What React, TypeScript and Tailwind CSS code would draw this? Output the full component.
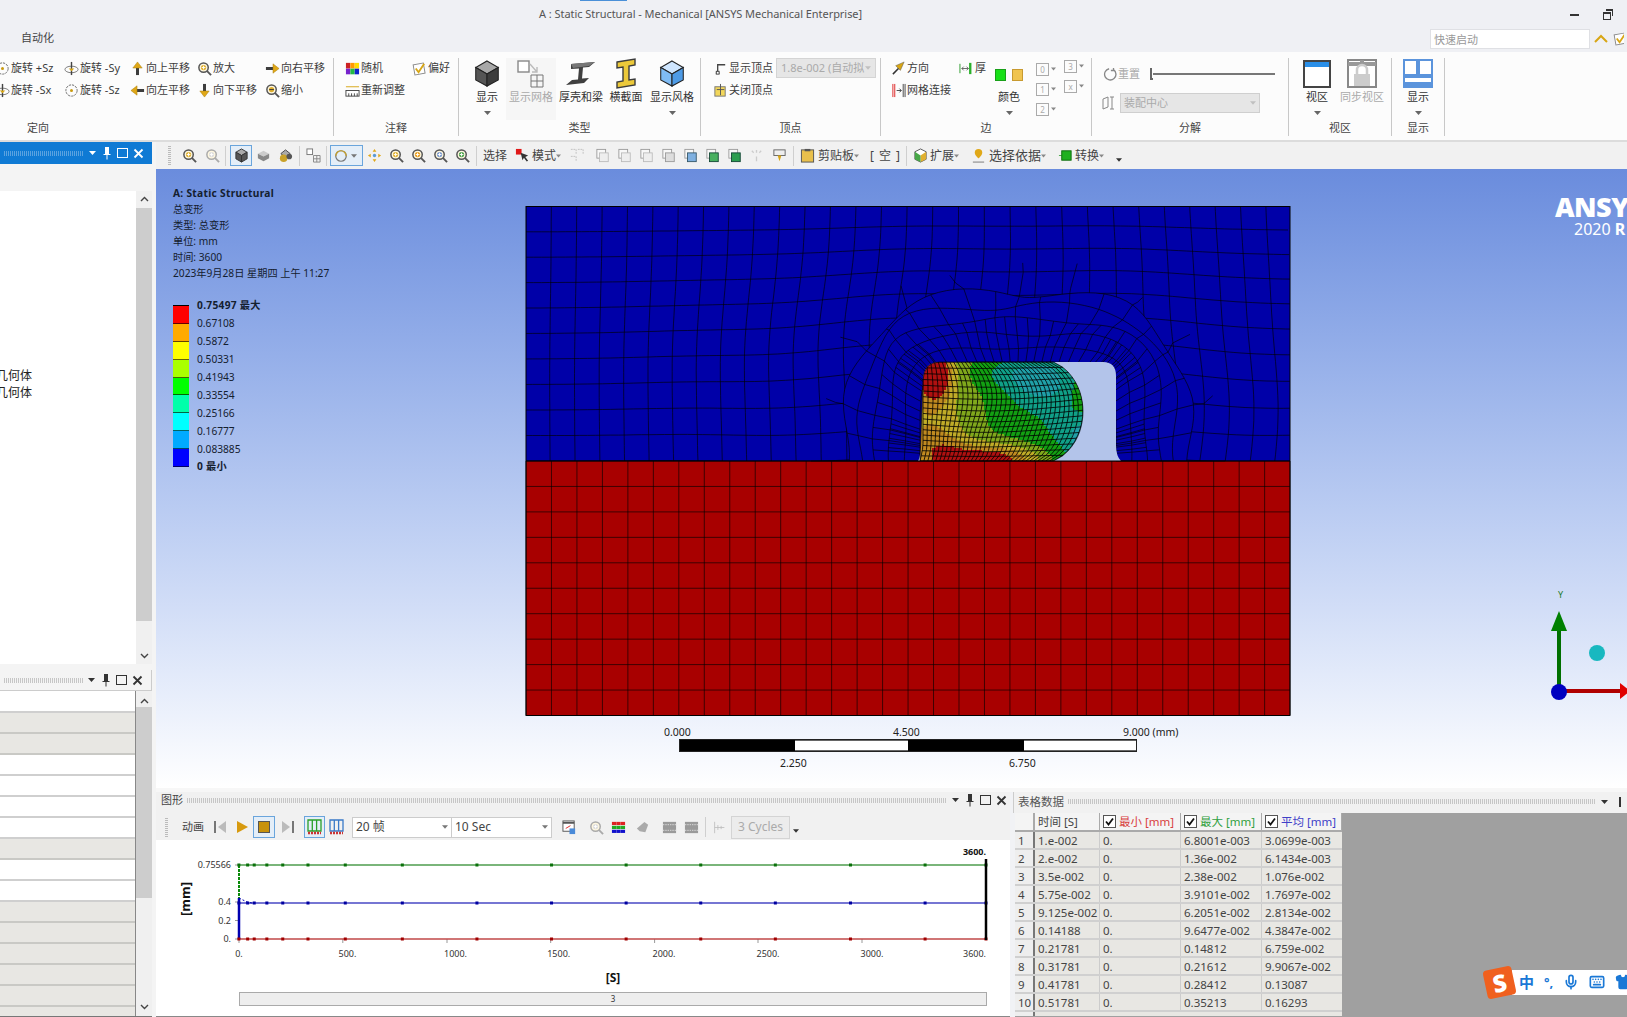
import React from 'react';
import { Keyboard, Mic, Shirt } from 'lucide-react';

const G = (a: number, b: number, sa: number, sb: number) => Math.exp(-(a * a) / (sa * sa) - (b * b) / (sb * sb));

// ---------- mesh generation for the contour plot ----------
const VX = 1020;
const warp = (x: number, y: number): [number, number] => {
  const d = G(x - VX, y - 400, 250, 125);
  return [x + (x - VX) * 0.13 * d + 4 * Math.sin(y / 30) * d, y + (y - 461) * 0.17 * d + 4 * Math.sin(x / 38) * d];
};
const pts = (p: [number, number][]) => p.map(([x, y]) => `${x.toFixed(1)},${y.toFixed(1)}`).join(' ');
const baseLines: string[] = [];
for (let i = 0; i <= 30; i++) {
  const x = 526 + i * 25.47;
  const p: [number, number][] = [];
  for (let y = 206; y <= 462; y += 8) p.push(warp(x, y));
  baseLines.push(pts(p));
}
for (let j = 0; j <= 10; j++) {
  const y = 206.5 + j * 25.45;
  const p: [number, number][] = [];
  for (let x = 526; x <= 1290; x += 8) p.push(warp(x, y));
  baseLines.push(pts(p));
}
const ring = (k: number, phi: number): [number, number] => {
  const a = 98 + 15 * k;
  const b = 99 + 14 * k;
  const n = Math.max(2.4, 6 - 0.6 * k);
  const c = Math.cos(phi);
  const s = Math.sin(phi);
  const r = 1 / Math.pow(Math.pow(Math.abs(c) / a, n) + Math.pow(Math.abs(s) / b, n), 1 / n);
  return [1018 + r * c + Math.sin(k + phi * 9) * k * 0.9, 461 - r * s + Math.sin(k * 2 + phi * 7) * k * 1.1 * s];
};
const phis = Array.from({ length: 41 }, (_, i) => (Math.PI * i) / 40);
const ringLines = Array.from({ length: 6 }, (_, k) => pts(Array.from({ length: 81 }, (_, i) => ring(k, (Math.PI * i) / 80))));
const rayLines: string[] = [];
phis.forEach((p, i) => {
  const end = i % 2 === 0 ? (i % 4 === 0 ? 7 : 5) : 3;
  rayLines.push(pts(Array.from({ length: end + 1 }, (_, k) => ring(k, p))));
});
// extra short rays where the mesh fans out round the corners and at the foot of the groove
[6, 8, 10, 12, 14, 16, 38, 40, 42, 44, 46, 48, 50, 52, 130, 132, 134, 136, 138, 140, 142, 164, 166, 168, 170, 172, 174].forEach((deg) => {
  rayLines.push(pts(Array.from({ length: 3 }, (_, k) => ring(k, (deg * Math.PI) / 180))));
});
const outerRing = `1188,461 ${ringLines[5]} 848,461`;

const rubberL = (t: number) => 923 - (t > 0.85 ? (t - 0.85) * 20 : 0);
const rubberR = (t: number) => 1040 + 43 * Math.sqrt(Math.max(0, 1 - Math.pow(1.9 * (t - 0.5), 2)));
const rubberPoint = (s: number, t: number): [number, number] => {
  const x = rubberL(t) + (rubberR(t) - rubberL(t)) * s;
  return [x + 5 * Math.sin(2 * Math.PI * t) * Math.sin(Math.PI * s), 362 + 99 * t + 5 * Math.sin(3 * s + 0.4) * Math.sin(Math.PI * t)];
};
const rubberEdge = Array.from({ length: 21 }, (_, i) => {
  const t = i / 20;
  return `L${rubberR(t).toFixed(1)},${(362 + 99 * t).toFixed(1)}`;
}).join(' ');
const rubberPath = `M920,461 L923,380 Q924,362 940,362 ${rubberEdge} Z`;
const rubberLines: string[] = [];
for (let i = 0; i <= 34; i++) rubberLines.push(pts(Array.from({ length: 17 }, (_, k) => rubberPoint(i / 34, k / 16))));
for (let k = 0; k <= 18; k++) rubberLines.push(pts(Array.from({ length: 35 }, (_, i) => rubberPoint(i / 34, k / 18))));

const bands = ['#0000b0', '#0070c0', '#20a0a8', '#10a088', '#12a012', '#80a81c', '#c0ac28', '#c08a20', '#b01010'];
const field = (u: number, w: number) =>
  0.66 - 0.28 * u +
  0.5 * G(u - 0.07, w - 0.12, 0.1, 0.24) +
  0.45 * G(u - 0.42, w - 0.98, 0.33, 0.16) +
  0.1 * G(u - 0.05, w - 0.6, 0.2, 0.4) +
  0.12 * G(u - 0.12, w - 0.85, 0.15, 0.2) -
  0.16 * G(u - 0.7, w - 0.22, 0.2, 0.22) -
  0.1 * G(u - 0.55, w - 0.1, 0.25, 0.15) +
  0.14 * G(u - 1, w - 0.3, 0.1, 0.3) -
  0.15 * G(u - 1, w - 0.75, 0.1, 0.2);
const contourRuns: { x: number; y: number; w: number; c: string }[] = [];
for (let y = 360; y < 462; y += 2) {
  let start = 918;
  let cur = -1;
  for (let x = 918; x <= 1086; x += 2) {
    const b = Math.max(2, Math.min(8, Math.floor(field((x - 923) / 160, (y - 362) / 99) * 9)));
    if (cur >= 0 && (b !== cur || x === 1086)) {
      contourRuns.push({ x: start, y, w: x - start, c: bands[cur] });
      start = x;
    }
    cur = b;
  }
}

// ---------- small icons ----------
const Svg = ({ w = 15, h = 15, box = '0 0 16 16', children }: { w?: number; h?: number; box?: string; children: React.ReactNode }) => (
  <svg width={w} height={h} viewBox={box} className="shrink-0">
    {children}
  </svg>
);
const RotDot = () => (
  <Svg>
    <circle cx="8" cy="8" r="6" fill="none" stroke="#666" strokeDasharray="2.5 1" />
    <circle cx="8" cy="8" r="1.6" fill="#c99a10" />
  </Svg>
);
const RotAxis = () => (
  <Svg>
    <ellipse cx="8" cy="9" rx="7" ry="3.5" fill="none" stroke="#777" />
    <path d="M8 1v14" stroke="#444" strokeWidth="1.5" />
    <path d="M5 8l3 3 3-3z" fill="#d8a614" />
  </Svg>
);
const Pan = ({ r = 0 }: { r?: number }) => (
  <Svg>
    <g transform={`rotate(${r} 8 8)`}>
      <path d="M6.4 7h3.2v8H6.4z" fill="#3d3d3d" />
      <path d="M8 1l5 6.5H3z" fill="#e0a818" stroke="#a87c10" strokeWidth=".5" />
    </g>
  </Svg>
);
const Mag = ({ kind = '+', c = '#e0b030', ring: rc = '#555' }: { kind?: string; c?: string; ring?: string }) => (
  <Svg>
    <circle cx="7" cy="7" r="5" fill="#fff8e0" stroke={rc} strokeWidth="1.6" />
    <circle cx="7" cy="7" r="2.8" fill={c} />
    {kind === '+' && <path d="M5 7h4M7 5v4" stroke="#fff" />}
    {kind === '-' && <path d="M4.5 7h5" stroke="#333" />}
    <path d="M10.5 10.5L15 15" stroke={rc} strokeWidth="2" />
  </Svg>
);
const ColorGrid = ({ full = false }: { full?: boolean }) => (
  <Svg>
    {(full
      ? ['#d22', '#d22', '#d22', '#2a2', '#2a2', '#2a2', '#11c', '#11c', '#11c']
      : ['#c22', '#f90', '#fd0', '#72c', '#2b4', '#12c']
    ).map((c, i) => (
      <rect key={i} x={1 + (i % 3) * 4.7} y={2 + Math.floor(i / 3) * (full ? 4.2 : 6.2)} width="4.6" height={full ? 3.4 : 6} fill={c} />
    ))}
  </Svg>
);
const Hex = ({ top, left, right }: { top: string; left: string; right: string }) => (
  <Svg w={26} h={29} box="0 0 30 31">
    <path d="M15 1L28 8.5 15 16 2 8.5z" fill={top} stroke="#222" strokeWidth="1.2" />
    <path d="M2 8.5L15 16v14L2 23z" fill={left} stroke="#222" strokeWidth="1.2" />
    <path d="M28 8.5L15 16v14l13-7z" fill={right} stroke="#222" strokeWidth="1.2" />
  </Svg>
);
const Caret = ({ c = '#555', w = 'w-[7px]' }: { c?: string; w?: string }) => (
  <svg viewBox="0 0 7 4" className={`${w} h-[4px] shrink-0`}>
    <path d="M0 0h7L3.5 4z" fill={c} />
  </svg>
);
const PanelButtons = ({ c = '#333' }: { c?: string }) => (
  <div className="flex items-center gap-[5px] shrink-0">
    <Caret c={c} w="w-[9px]" />
    <svg width="10" height="14" viewBox="0 0 10 14">
      <path d="M3 1h4v7h1.5v1H5.5v4.500h-1V9H1.500V8H3z" fill={c} />
    </svg>
    <div className="w-[11px] h-[10px] border-[1.5px]" style={{ borderColor: c }} />
    <svg width="11" height="11" viewBox="0 0 11 11">
      <path d="M1.500 1.500l8 8M9.500 1.500l-8 8" stroke={c} strokeWidth="1.800" />
    </svg>
  </div>
);
const Grip = ({ light = false }: { light?: boolean }) => (
  <div
    className={
      light
        ? 'flex-1 h-[5px] mx-[4px] bg-[repeating-linear-gradient(90deg,#5aa2e0_0_1px,transparent_1px_2px)]'
        : 'flex-1 h-[5px] mx-[4px] bg-[repeating-linear-gradient(90deg,#c6c6c6_0_1px,transparent_1px_2px)]'
    }
  />
);
const ScrollArrow = ({ up = false }: { up?: boolean }) => (
  <svg width="9" height="6" viewBox="0 0 9 6" className="mx-auto">
    <path d={up ? 'M1 5l3.500-3.500L8 5' : 'M1 1l3.500 3.500L8 1'} fill="none" stroke="#444" strokeWidth="1.400" />
  </svg>
);

// ---------- ribbon ----------
const Item = ({ icon, label, className = '' }: { icon: React.ReactNode; label: string; className?: string }) => (
  <div className={`flex items-center gap-px h-[20px] whitespace-nowrap ${className}`}>
    <span className="w-[15px] flex justify-center shrink-0">{icon}</span>
    <span>{label}</span>
  </div>
);
const Group = ({ label, className, contentClass = '', labelClass = 'text-center', children }: { label: string; className: string; contentClass?: string; labelClass?: string; children: React.ReactNode }) => (
  <div className={`h-[78px] mt-[6px] flex flex-col border-r border-[#c8c8c8] shrink-0 ${className}`}>
    <div className={`h-[62px] overflow-visible ${contentClass}`}>{children}</div>
    <div className={`h-[16px] leading-[16px] text-[#444] ${labelClass}`}>{label}</div>
  </div>
);
const BigBtn = ({ icon, label, className = '', off = false, caret = false }: { icon: React.ReactNode; label: string; className?: string; off?: boolean; caret?: boolean }) => (
  <div className={`flex flex-col items-center shrink-0 ${className}`}>
    <div className="h-[31px] flex items-center justify-center">{icon}</div>
    <div className={`h-[16px] leading-[16px] whitespace-nowrap ${off ? 'text-[#aaa]' : 'text-[#333]'}`}>{label}</div>
    {caret && (
      <div className="mt-[6px]">
        <Caret c={off ? '#aaa' : '#666'} />
      </div>
    )}
  </div>
);
const NumBox = ({ t }: { t: string }) => (
  <div className="flex items-center gap-[2px] h-[20px]">
    <div className="w-[13px] h-[13px] border border-[#aaa] text-[8px] leading-[11px] text-center text-[#aaa]">{t}</div>
    <Caret c="#888" w="w-[5px]" />
  </div>
);

const Ribbon = () => (
  <div className="h-[90px] flex bg-[#fcfcfc] border-b-2 border-[#dcdcdc] text-[11px] text-[#3c3c3c]">
    <Group label="定向" className="w-[334px]" labelClass="pl-[27px]">
      <div className="grid grid-cols-[64px_66px_67px_68px_1fr] gap-y-[2px]">
        <Item className="-ml-[5px]" icon={<RotDot />} label="旋转 +Sz" />
        <Item icon={<RotAxis />} label="旋转 -Sy" />
        <Item icon={<Pan />} label="向上平移" />
        <Item icon={<Mag />} label="放大" />
        <Item icon={<Pan r={90} />} label="向右平移" />
        <Item className="-ml-[5px]" icon={<RotAxis />} label="旋转 -Sx" />
        <Item icon={<RotDot />} label="旋转 -Sz" />
        <Item icon={<Pan r={-90} />} label="向左平移" />
        <Item icon={<Pan r={180} />} label="向下平移" />
        <Item icon={<Mag kind="-" />} label="缩小" />
      </div>
    </Group>
    <Group label="注释" className="w-[125px]" contentClass="pl-[11px]">
      <div className="flex flex-col gap-[2px]">
        <div className="flex">
          <Item className="w-[67px]" icon={<ColorGrid />} label="随机" />
          <Item icon={
            <Svg>
              <rect x="2" y="3" width="11" height="11" fill="#fff" stroke="#888" transform="rotate(-10 8 8)" />
              <path d="M4 8l3 4 6-9" fill="none" stroke="#d8a614" strokeWidth="2" />
            </Svg>
          } label="偏好" />
        </div>
        <Item icon={
          <Svg>
            <path d="M1 4h14" stroke="#d8a614" />
            <rect x="1" y="8" width="14" height="6" fill="#fff" stroke="#444" />
            <path d="M4 11v3M7 11v3M10 11v3M13 11v3" stroke="#444" />
          </Svg>
        } label="重新调整" />
      </div>
    </Group>
    <Group label="类型" className="w-[242px]">
      <div className="flex pl-[13px]">
        <BigBtn className="w-[30px]" caret label="显示" icon={<Hex top="#a8a8a8" left="#555" right="#3c3c3c" />} />
        <BigBtn className="w-[50px] ml-[4px] bg-[#f6f6f6] h-[62px]" off label="显示网格" icon={
          <Svg w={30} h={30} box="0 0 30 30">
            <rect x="2" y="2" width="11" height="11" fill="#fff" stroke="#888" strokeWidth="1.400" />
            <path d="M14 5l7 8M21 8v5h-5" fill="none" stroke="#bbb" strokeWidth="1.400" />
            <path d="M15 16h12v12H15zM21 16v12M15 22h12" fill="none" stroke="#777" />
          </Svg>
        } />
        <BigBtn className="w-[50px]" label="厚壳和梁" icon={
          <Svg w={32} h={26} box="0 0 32 26">
            <path d="M6 3l24-2-6 5-6 .5-1 11 7-.5-5 5L1 24l6-5 6-.5 1-11-8 .5z" fill="#3f3f3f" />
            <path d="M6 3l24-2-6 4L8 7z" fill="#777" />
          </Svg>
        } />
        <BigBtn className="w-[42px] -ml-px" label="横截面" icon={
          <Svg w={22} h={31} box="0 0 22 31">
            <path d="M2 4l18-3v6l-6 1v14l6-1v6L2 30v-6l6-1V9L2 10z" fill="#ecc93a" stroke="#3c3c3c" strokeWidth="1.400" />
          </Svg>
        } />
        <BigBtn className="w-[44px] ml-[3px]" caret label="显示风格" icon={<Hex top="#cfe6ff" left="#7fbcf5" right="#4e9be6" />} />
      </div>
    </Group>
    <Group label="顶点" className="w-[180px]" contentClass="pl-[12px]">
      <div className="flex flex-col gap-[2px]">
        <div className="flex items-center">
          <Item icon={
            <Svg>
              <path d="M5 13V4h8M3 13h4" fill="none" stroke="#444" strokeWidth="1.400" />
              <rect x="3.500" y="11" width="3" height="3" fill="#fff" stroke="#444" />
            </Svg>
          } label="显示顶点" />
          <div className="ml-[3px] w-[100px] h-[20px] flex items-center px-[4px] bg-[#e6e6e6] border border-[#d4d4d4] text-[#aaa] whitespace-nowrap overflow-hidden">
            <span className="flex-1 overflow-hidden">1.8e-002 (自动拟</span>
            <Caret c="#c0c0c0" w="w-[6px]" />
          </div>
        </div>
        <Item icon={
          <Svg>
            <rect x="2" y="4" width="11" height="10" fill="#f3d75a" stroke="#777" />
            <path d="M8 1v12M4 7h8" stroke="#555" />
          </Svg>
        } label="关闭顶点" />
      </div>
    </Group>
    <Group label="边" className="w-[211px]">
      <div className="flex">
        <div className="w-[113px] pl-[10px] flex flex-col gap-[2px]">
          <div className="flex">
            <Item className="w-[68px]" icon={
              <Svg>
                <path d="M2 14l7-7" stroke="#333" strokeWidth="1.600" />
                <path d="M5 5l9-4-4 9z" fill="#d8a614" stroke="#555" strokeWidth=".5" />
              </Svg>
            } label="方向" />
            <Item icon={
              <Svg>
                <path d="M1 3v10" stroke="#2a9a2a" />
                <path d="M12 2v12" stroke="#2ab02a" strokeWidth="2.500" />
                <path d="M3 8h7M3 8l2-2M3 8l2 2M10 8l-2-2M10 8l-2 2" stroke="#444" fill="none" strokeWidth=".8" />
              </Svg>
            } label="厚" />
          </div>
          <Item icon={
            <Svg>
              <path d="M2 1v14M4 1v14" stroke="#d22" />
              <path d="M13 1v14M15 1v14" stroke="#444" />
              <path d="M6 8h5M9 6l2 2-2 2" stroke="#444" fill="none" />
            </Svg>
          } label="网格连接" />
        </div>
        <BigBtn className="w-[30px]" caret label="颜色" icon={
          <div className="flex gap-[6px] mt-[3px]">
            <div className="w-[11px] h-[12px] bg-[#18e018] border border-[#19a019]" />
            <div className="w-[11px] h-[12px] bg-[#f0c450] border border-[#c89a30]" />
          </div>
        } />
        <div className="ml-[12px] w-[28px] pt-[1px]">
          <NumBox t="0" />
          <NumBox t="1" />
          <NumBox t="2" />
        </div>
        <div className="flex-1 -mt-[2px]">
          <NumBox t="3" />
          <NumBox t="x" />
        </div>
      </div>
    </Group>
    <Group label="分解" className="w-[197px]" contentClass="pl-[10px] text-[#aaa]">
      <div className="flex items-center mt-[6px] h-[20px]">
        <Item icon={
          <svg width="14" height="14" viewBox="0 0 16 16">
            <path d="M12 3a6.500 6.500 0 1 1-5-1M12 1v3H9" fill="none" stroke="#888" strokeWidth="1.500" />
          </svg>
        } label="重置" />
        <div className="ml-[10px] w-[125px] flex items-center">
          <div className="w-[3px] h-[12px] border-l-2 border-b-2 border-[#666]" />
          <div className="flex-1 h-[2px] bg-[#777]" />
        </div>
      </div>
      <div className="flex items-center mt-[9px]">
        <svg width="14" height="16" viewBox="0 0 14 16" className="mr-[4px] shrink-0">
          <path d="M1 4l5-2v10l-5 2zM10 2v12M8 2h4M8 14h4" fill="none" stroke="#888" />
        </svg>
        <div className="w-[140px] h-[20px] flex items-center px-[3px] bg-[#e6e6e6] border border-[#cfcfcf]">
          <span className="flex-1">装配中心</span>
          <Caret c="#c0c0c0" w="w-[6px]" />
        </div>
      </div>
    </Group>
    <Group label="视区" className="w-[103px]" contentClass="pl-[13px]">
      <div className="flex">
        <BigBtn className="w-[30px]" caret label="视区" icon={
          <div className="w-[28px] h-[28px] border-2 border-[#444] bg-white">
            <div className="h-[5px] bg-[#2a8fe8]" />
          </div>
        } />
        <BigBtn className="w-[46px] ml-[7px]" off label="同步视区" icon={
          <Svg w={30} h={29} box="0 0 30 29">
            <rect x="1" y="1" width="28" height="27" fill="#fff" stroke="#888" strokeWidth="2" />
            <path d="M1 5h28M15 1v6" stroke="#999" strokeWidth="4" />
            <path d="M10 15v-4a5 5 0 0 1 10 0v4" fill="none" stroke="#ccc" strokeWidth="2.500" />
            <rect x="7" y="15" width="16" height="12" fill="#ccc" />
          </Svg>
        } />
      </div>
    </Group>
    <Group label="显示" className="w-[53px]">
      <div className="flex justify-center">
        <BigBtn caret label="显示" icon={
          <Svg w={30} h={30} box="0 0 30 30">
            <path d="M1 1h13v15H1zM16 1h13v15H16zM1 18h28v10H1z" fill="#fff" stroke="#5b94dc" strokeWidth="2" />
            <path d="M1 25h28" stroke="#5b94dc" strokeWidth="4" />
          </Svg>
        } />
      </div>
    </Group>
  </div>
);

// ---------- graphics toolbar ----------
const Sep = ({ className = '' }: { className?: string }) => <div className={`w-px h-[20px] bg-[#cfcfcf] shrink-0 ${className}`} />;
const PageIcon = ({ c = '#bbb', fill = '#eee' }: { c?: string; fill?: string }) => (
  <Svg w={14} h={15}>
    <rect x="1" y="1" width="10" height="10" fill="#f8f8f8" stroke="#999" />
    <rect x="4" y="5" width="10" height="10" fill={fill} stroke={c} />
  </Svg>
);

const GraphicsToolbar = () => (
  <div className="h-[27px] flex items-center pl-[12px] bg-[#f1f1f1] text-[12px] text-[#444] whitespace-nowrap">
    <div className="w-[3px] h-[19px] bg-[repeating-linear-gradient(0deg,#bbb_0_1px,transparent_1px_2px)]" />
    <div className="flex items-center ml-[11px] gap-[8px]">
      <Mag />
      <Mag c="#ddd" ring="#aaa" />
    </div>
    <Sep className="ml-[5px]" />
    <div className="ml-[4px] w-[22px] h-[21px] flex items-center justify-center bg-[#e4eef8] border border-[#6aa5dc]">
      <Svg>
        <path d="M8 1l6 3.500L8 8 2 4.500z" fill="#aaa" stroke="#333" />
        <path d="M2 4.500L8 8v7l-6-3.500zM14 4.500L8 8v7l6-3.500z" fill="#555" stroke="#333" />
      </Svg>
    </div>
    <div className="ml-[4px]">
      <Svg>
        <path d="M8 3l6 3-6 3-6-3z" fill="#ccc" />
        <path d="M2 6l6 3v5l-6-3zM14 6L8 9v5l6-3z" fill="#888" />
      </Svg>
    </div>
    <div className="ml-[7px]">
      <Svg>
        <path d="M3 6l5-4 5 4-5 4z" fill="#aaa" stroke="#444" />
        <circle cx="6" cy="11" r="4" fill="#c9a22a" />
        <circle cx="12" cy="9" r="3" fill="#555" />
      </Svg>
    </div>
    <Sep className="ml-[6px]" />
    <div className="ml-[6px]">
      <Svg>
        <rect x="1" y="1" width="6" height="6" fill="#fff" stroke="#777" />
        <path d="M8 8h7v7H8zM11.500 8v7M8 11.500h7" fill="none" stroke="#888" />
      </Svg>
    </div>
    <Sep className="ml-[5px]" />
    <div className="ml-[3px] w-[33px] h-[21px] flex items-center gap-[3px] pl-[3px] bg-[#e4eef8] border border-[#6aa5dc]">
      <Svg w={14} h={14}>
        <circle cx="8" cy="8" r="6" fill="none" stroke="#777" strokeWidth="1.400" />
        <path d="M2 8a6 6 0 0 1 12 0" fill="none" stroke="#c9a22a" strokeWidth="1.400" />
      </Svg>
      <Caret c="#777" w="w-[6px]" />
    </div>
    <div className="ml-[4px]">
      <Svg>
        <path d="M8 1l2 3H6zM8 15l2-3H6zM1 8l3-2v4zM15 8l-3-2v4z" fill="#e0a818" />
        <circle cx="8" cy="8" r="1.800" fill="#5a9ad8" />
      </Svg>
    </div>
    <div className="ml-[7px] flex items-center gap-[7px]">
      <Mag />
      <Mag c="#e89a18" />
      <Mag c="#7a9ad0" />
      <Mag c="#49a04a" />
    </div>
    <Sep className="ml-[6px]" />
    <span className="ml-[6px]">选择</span>
    <div className="ml-[8px]">
      <Svg>
        <rect x="1" y="1" width="6" height="6" fill="#e01818" />
        <path d="M6 5l8 3-3 1.500 3 4-1.500 1-3-4L8 13z" fill="#333" />
      </Svg>
    </div>
    <span className="ml-[2px]">模式</span>
    <Caret c="#888" w="w-[5px]" />
    <div className="ml-[9px]">
      <Svg w={14} h={15}>
        <path d="M1 1h6v6M9 1h6v6M1 9h6v6" fill="none" stroke="#bbb" strokeDasharray="2 1" />
      </Svg>
    </div>
    <div className="ml-[12px] flex items-center gap-[8px]">
      <PageIcon />
      <PageIcon />
      <PageIcon />
      <PageIcon c="#999" fill="#ddd" />
      <PageIcon c="#356" fill="#7fb0e0" />
      <PageIcon c="#143" fill="#48b060" />
      <PageIcon c="#143" fill="#2c9e50" />
    </div>
    <div className="ml-[7px]">
      <Svg>
        <path d="M3 3l2 2M8 2v3M13 3l-2 2M8 9v5" stroke="#ccc" strokeWidth="1.400" />
      </Svg>
    </div>
    <div className="ml-[8px]">
      <Svg>
        <rect x="2" y="2" width="12" height="6" fill="#eee" stroke="#666" />
        <path d="M6 8l2 6 2-6z" fill="#d8a614" />
      </Svg>
    </div>
    <Sep className="ml-[6px]" />
    <div className="ml-[6px]">
      <Svg>
        <rect x="1.500" y="2" width="13" height="13" fill="#e9c04c" stroke="#555" />
        <rect x="5" y="1" width="6" height="2.500" fill="#555" />
      </Svg>
    </div>
    <span className="ml-[3px]">剪贴板</span>
    <Caret c="#888" w="w-[5px]" />
    <span className="ml-[11px] w-[30px] flex justify-between"><span>[</span><span>空</span><span>]</span></span>
    <Sep className="ml-[6px]" />
    <div className="ml-[6px]">
      <Svg>
        <path d="M8 1l6 3v8l-6 3-6-3V4z" fill="#fff" stroke="#555" />
        <path d="M8 8l6-4v8l-6 3z" fill="#e0b030" />
        <path d="M2 4l6 4v7l-6-3z" fill="#48a848" />
      </Svg>
    </div>
    <span className="ml-[2px]">扩展</span>
    <Caret c="#888" w="w-[5px]" />
    <div className="ml-[12px]">
      <Svg>
        <path d="M8 1a4 4 0 0 1 4 4c0 3-4 6-4 6S4 8 4 5a4 4 0 0 1 4-4z" fill="#e0a818" />
        <path d="M2 15h12" stroke="#777" />
      </Svg>
    </div>
    <span className="ml-[3px] text-[13px]">选择依据</span>
    <Caret c="#888" w="w-[5px]" />
    <div className="ml-[12px]">
      <Svg>
        <path d="M1 8h3" stroke="#4a4" />
        <rect x="4" y="3" width="10" height="10" fill="#1fb01f" stroke="#0a6a0a" />
      </Svg>
    </div>
    <span className="ml-[2px]">转换</span>
    <Caret c="#888" w="w-[5px]" />
    <div className="ml-[12px] mt-[8px]">
      <Caret c="#333" w="w-[6px]" />
    </div>
  </div>
);

// ---------- viewport ----------
const legendColors = ['#ff0000', '#ffaa00', '#ffff00', '#aaff00', '#00ff00', '#00ffaa', '#00ffff', '#00aaff', '#0000ff'];
const legendLabels = ['0.75497 最大', '0.67108', '0.5872', '0.50331', '0.41943', '0.33554', '0.25166', '0.16777', '0.083885', '0 最小'];

const Viewport = () => (
  <div className="relative h-[619px] overflow-hidden bg-linear-to-b from-[#6a8cdd] to-white">
    <svg width="1471" height="619" viewBox="156 169 1471 619" className="block">
      <defs>
        <clipPath id="blue-part">
          <rect x="526" y="206.500" width="764" height="254.500" />
        </clipPath>
        <clipPath id="rubber">
          <path d={rubberPath} />
        </clipPath>
      </defs>
      <rect x="526" y="206.500" width="764" height="254.500" fill="#0000a8" />
      <rect x="526" y="461" width="764" height="254.500" fill="#a80000" />
      <g clipPath="url(#blue-part)" fill="none" stroke="#000" strokeOpacity=".7" strokeWidth=".9">
        {baseLines.map((p, i) => (
          <polyline key={i} points={p} />
        ))}
      </g>
      <polygon points={outerRing} fill="#0000a8" />
      <g fill="none" stroke="#000" strokeOpacity=".7" strokeWidth=".9">
        {ringLines.map((p, i) => (
          <polyline key={i} points={p} />
        ))}
        {rayLines.map((p, i) => (
          <polyline key={i} points={p} />
        ))}
        {Array.from({ length: 31 }, (_, i) => (
          <path key={i} d={`M${526 + i * 25.47} 461V715`} />
        ))}
        {Array.from({ length: 10 }, (_, j) => (
          <path key={j} d={`M526 ${461 + j * 25.45}H1290`} />
        ))}
      </g>
      <path d="M918,461 Q923,455 923,380 Q924,362 940,362 L1103,362 Q1116,362 1116,376 L1116,445 Q1116,456 1121,461 Z" fill="#b3c4ea" />
      <g clipPath="url(#rubber)">
        {contourRuns.map((r, i) => (
          <rect key={i} x={r.x} y={r.y} width={r.w} height="2" fill={r.c} />
        ))}
        <g fill="none" stroke="#000" strokeOpacity=".9" strokeWidth=".9">
          {rubberLines.map((p, i) => (
            <polyline key={i} points={p} />
          ))}
        </g>
      </g>
      <path d={rubberPath} fill="none" stroke="#000" strokeOpacity=".6" />
      <path d="M526 461H1290" stroke="#000" strokeWidth="1.200" />
      <rect x="526" y="206.500" width="764" height="509" fill="none" stroke="#000" />
      {/* triad */}
      <path d="M1557 630h4v62h-4z" fill="#007000" />
      <path d="M1559 611l8 20h-16z" fill="#008000" />
      <path d="M1559 689h62v4h-62z" fill="#b00000" />
      <path d="M1620 683l10 8-10 8z" fill="#e00000" />
      <circle cx="1559" cy="692" r="8" fill="#0000c0" />
      <circle cx="1597" cy="653" r="8" fill="#18b8c0" />
    </svg>

    <div className="absolute left-[17px] top-[16px] text-[10.200px] leading-[16px] text-[#14202f]">
      <div className="font-bold tracking-[0.3px]">A: Static Structural</div>
      <div>总变形</div>
      <div>类型: 总变形</div>
      <div>单位: mm</div>
      <div>时间: 3600</div>
      <div>2023年9月28日 星期四 上午 11:27</div>
      <div className="flex mt-[15px]">
        <div className="w-[16px] self-start mt-[9px] mr-[8px] border-t border-black">
          {legendColors.map((c) => (
            <div key={c} className="h-[17.900px] border-b border-black/60 w-full" style={{ backgroundColor: c }} />
          ))}
        </div>
        <div>
          {legendLabels.map((l, i) => (
            <div key={l} className={`h-[17.950px] leading-[18px] ${i === 0 || i === 9 ? 'font-bold tracking-[0.3px]' : ''}`}>
              {l}
            </div>
          ))}
        </div>
      </div>
    </div>

    <div className="absolute left-[1399px] top-[27px] text-white">
      <div className="text-[27px] leading-[22px] font-extrabold tracking-[-0.5px] [font-family:'Open_Sans',sans-serif]">ANSYS</div>
      <div className="ml-[19px] mt-[1px] text-[16px] leading-[20px] whitespace-nowrap">
        2020 <span className="font-bold">R</span>
      </div>
    </div>
    <div className="absolute left-[1402px] top-[419px] text-[9px] text-[#1d7a2a]">Y</div>

    <div className="absolute left-[523px] top-[556px] w-[640px] text-[10.500px] text-[#222]">
      <div className="relative h-[14px]">
        <span className="absolute left-[-15px]">0.000</span>
        <span className="absolute left-[214px]">4.500</span>
        <span className="absolute left-[444px] whitespace-nowrap">9.000 (mm)</span>
      </div>
      <div className="w-[458px] h-[13px] flex border border-[#222] bg-white">
        <div className="w-[115px] bg-black" />
        <div className="w-[113px] border-y border-[#666]" />
        <div className="w-[116px] bg-black" />
        <div className="flex-1 border-y border-[#666]" />
      </div>
      <div className="relative h-[14px] mt-[4px]">
        <span className="absolute left-[101px]">2.250</span>
        <span className="absolute left-[330px]">6.750</span>
      </div>
    </div>
  </div>
);

// ---------- graph panel ----------
const markers = [162, 178, 190, 213, 242, 288, 356, 460, 596, 732, 868, 1004, 1140, 1277, 1413, 1524].map((z) => 150 + z / 1.823);
const ticks: [string, number][] = [['0.', 239], ['500.', 347.5], ['1000.', 455.5], ['1500.', 558.7], ['2000.', 664], ['2500.', 768], ['3000.', 872], ['3600.', 974.5]];

const Chart = () => (
  <svg width="854" height="175" viewBox="156 840 854 175" className="block">
    <g fontSize="9" fill="#333" fontFamily="Noto Sans, sans-serif">
      <text x="231" y="868" textAnchor="end">0.75566</text>
      <text x="231" y="905" textAnchor="end">0.4</text>
      <text x="231" y="924" textAnchor="end">0.2</text>
      <text x="231" y="942" textAnchor="end">0.</text>
      {ticks.map(([t, x]) => (
        <text key={t} x={x} y="957" textAnchor="middle">
          {t}
        </text>
      ))}
      <text x="986" y="855" textAnchor="end" fontWeight="700" fill="#111">3600.</text>
    </g>
    <text x="186" y="899" fontSize="13" fontWeight="700" fill="#111" textAnchor="middle" fontFamily="Noto Sans, sans-serif" transform="rotate(-90 186 899)" dominantBaseline="middle">[mm]</text>
    <text x="613" y="982" fontSize="12" fontWeight="700" fill="#111" textAnchor="middle" fontFamily="Noto Sans, sans-serif">[S]</text>
    <path d="M239 939v4M342.800 939v4M447 939v4M550.700 939v4M654.600 939v4M758 939v4M862 939v4" stroke="#999" />
    <path d="M235 865h4M235 902h4M235 920.500h4M235 939h4" stroke="#999" />
    <path d="M239 865H986" stroke="#4e9d4e" strokeWidth="1.500" />
    <path d="M239 903H986" stroke="#4848c4" strokeWidth="1.500" />
    <path d="M239 939H986" stroke="#c04848" strokeWidth="1.500" />
    <path d="M239 865V903" stroke="#0a8a0a" strokeWidth="2" strokeDasharray="3 1" />
    <path d="M239 898V939" stroke="#0000b0" strokeWidth="2.500" />
    <path d="M239 898l8 4 5 1" stroke="#0000b0" fill="none" strokeDasharray="2 2" />
    {markers.map((x, i) => (
      <g key={i}>
        <rect x={x - 1.500} y="863.500" width="3" height="3" fill="#0a700a" />
        <rect x={x - 1.500} y="901.500" width="3" height="3" fill="#0000a0" />
        <rect x={x - 1.500} y="937.500" width="3" height="3" fill="#a00000" />
      </g>
    ))}
    <path d="M986 859V940" stroke="#000" strokeWidth="2.500" />
  </svg>
);

const Select = ({ label, className }: { label: string; className: string }) => (
  <div className={`h-[21px] flex items-center px-[3px] bg-white border-y border-r border-[#ccc] ${className}`}>
    <span className="flex-1">{label}</span>
    <Caret c="#777" w="w-[6px]" />
  </div>
);

const GraphPanel = () => (
  <div className="w-[854px] flex flex-col shrink-0">
    <div className="h-[16px] flex items-center pl-[5px] pr-[3px] bg-[#f1f1f1] text-[11px] text-[#444]">
      <span>图形</span>
      <Grip />
      <PanelButtons />
    </div>
    <div className="h-[32px] flex items-center pt-[6px] pl-[9px] bg-[#f1f1f1] text-[12px] text-[#444] whitespace-nowrap">
      <div className="w-[3px] h-[19px] bg-[repeating-linear-gradient(0deg,#bbb_0_1px,transparent_1px_2px)]" />
      <span className="ml-[14px] text-[11px]">动画</span>
      <svg width="13" height="14" viewBox="0 0 13 14" className="ml-[10px]">
        <path d="M1 1v12" stroke="#777" strokeWidth="2" />
        <path d="M12 1L4 7l8 6z" fill="#bbb" />
      </svg>
      <svg width="11" height="14" viewBox="0 0 11 14" className="ml-[10px]">
        <path d="M0 1l11 6L0 13z" fill="#d79a0f" />
      </svg>
      <div className="ml-[5px] w-[22px] h-[22px] flex items-center justify-center bg-[#e4eef8] border border-[#6aa5dc]">
        <div className="w-[12px] h-[12px] bg-[#c8920c] border border-[#555]" />
      </div>
      <svg width="13" height="14" viewBox="0 0 13 14" className="ml-[6px]">
        <path d="M1 1l8 6-8 6z" fill="#bbb" />
        <path d="M12 1v12" stroke="#777" strokeWidth="2" />
      </svg>
      <div className="ml-[10px] w-[21px] h-[22px] flex items-center justify-center bg-[#e4eef8] border border-[#6aa5dc]">
        <ColorBars c="#2aa02a" />
      </div>
      <div className="ml-[4px]">
        <ColorBars c="#3a7ac8" />
      </div>
      <div className="ml-[8px] flex">
        <Select className="w-[100px] border-l" label="20 帧" />
        <Select className="w-[100px]" label="10 Sec" />
      </div>
      <div className="ml-[10px]">
        <Svg>
          <rect x="1" y="1" width="12" height="11" fill="#fff" stroke="#555" />
          <path d="M1 3h12" stroke="#555" strokeWidth="2" />
          <path d="M4 9l5-3" stroke="#d22" />
          <rect x="8" y="9" width="6" height="6" fill="#4a8ad8" />
        </Svg>
      </div>
      <div className="ml-[12px]">
        <Mag c="#ddd" ring="#aaa" />
      </div>
      <div className="ml-[7px]">
        <ColorGrid full />
      </div>
      <div className="ml-[9px]">
        <Svg>
          <path d="M2 9l8-7 4 3-3 8-6-1z" fill="#aaa" />
        </Svg>
      </div>
      <div className="ml-[12px]">
        <FilmIcon />
      </div>
      <div className="ml-[7px]">
        <FilmIcon />
      </div>
      <Sep className="ml-[6px]" />
      <div className="ml-[7px]">
        <Svg w={13}>
          <path d="M2 1v14M2 8h12M6 5v6M10 6v4" stroke="#bbb" />
        </Svg>
      </div>
      <div className="ml-[5px] w-[59px] h-[23px] flex items-center justify-center bg-[#ececec] border border-[#d4d4d4] text-[#aaa]">3 Cycles</div>
      <div className="ml-[3px] mt-[8px]">
        <Caret c="#333" w="w-[6px]" />
      </div>
    </div>
    <div className="relative flex-1 bg-white border-b border-[#888]">
      <Chart />
      <div className="absolute left-[83px] top-[152px] w-[748px] h-[14px] bg-[#eeeeee] border border-[#aaa] text-[8px] leading-[12px] text-center text-[#333]">3</div>
    </div>
  </div>
);

const ColorBars = ({ c }: { c: string }) => (
  <svg width="15" height="17" viewBox="0 0 15 17" className="block">
    <path d="M1 1h13v11H1zM5.300 1v11M9.600 1v11" fill="none" stroke={c} strokeWidth="1.300" />
    <path d="M1 14h13" stroke="#c33" strokeWidth="2.500" strokeDasharray="2 1" />
  </svg>
);
const FilmIcon = () => (
  <Svg>
    <rect x="1" y="2" width="14" height="12" fill="#9a9a9a" />
    <path d="M1 5h14M1 11h14" stroke="#ddd" strokeDasharray="1.500 1" />
  </Svg>
);

// ---------- table data ----------
const rows = [
  ['1.e-002', '0.', '6.8001e-003', '3.0699e-003'],
  ['2.e-002', '0.', '1.36e-002', '6.1434e-003'],
  ['3.5e-002', '0.', '2.38e-002', '1.076e-002'],
  ['5.75e-002', '0.', '3.9101e-002', '1.7697e-002'],
  ['9.125e-002', '0.', '6.2051e-002', '2.8134e-002'],
  ['0.14188', '0.', '9.6477e-002', '4.3847e-002'],
  ['0.21781', '0.', '0.14812', '6.759e-002'],
  ['0.31781', '0.', '0.21612', '9.9067e-002'],
  ['0.41781', '0.', '0.28412', '0.13087'],
  ['0.51781', '0.', '0.35213', '0.16293'],
];

const Check = () => (
  <svg width="13" height="13" viewBox="0 0 13 13" className="shrink-0 mr-[3px]">
    <rect x=".5" y=".5" width="12" height="12" fill="#fff" stroke="#555" />
    <path d="M3 6.500l2.500 3L10 3.500" fill="none" stroke="#111" strokeWidth="1.800" />
  </svg>
);

const TableHead = ({ w, color, label }: { w: string; color: string; label: string }) => (
  <div className={`${w} h-full flex items-center pl-[3px] border-r border-b-2 border-[#aaa] bg-[#f4f4f4] whitespace-nowrap`}>
    <Check />
    <span className={color}>{label}</span>
  </div>
);

const TablePanel = () => (
  <div className="flex-1 min-w-0 flex flex-col relative overflow-hidden">
    <div className="h-[21px] flex items-center pl-[4px] pr-[3px] pb-[2px] bg-[#f1f1f1] text-[11.500px] text-[#555] border-l border-[#ccc] ml-[3px]">
      <span>表格数据</span>
      <Grip />
      <div className="w-[24px] overflow-hidden shrink-0">
        <PanelButtons />
      </div>
    </div>
    <div className="flex-1 bg-[#a0a0a0] ml-[5px] text-[11.500px] text-[#444] overflow-hidden">
      <div className="w-[327px]">
        <div className="h-[19px] flex">
          <div className="w-[20px] border-r-2 border-b-2 border-[#aaa] bg-[#f4f4f4]" />
          <div className="w-[65px] pl-[3px] leading-[17px] border-r border-b-2 border-[#aaa] bg-[#f4f4f4]">时间 [S]</div>
          <TableHead w="w-[81px]" color="text-[#d84040]" label="最小 [mm]" />
          <TableHead w="w-[81px]" color="text-[#30a040]" label="最大 [mm]" />
          <TableHead w="w-[80px]" color="text-[#4040c8]" label="平均 [mm]" />
        </div>
        {rows.map((r, i) => (
          <div key={i} className="h-[18px] flex leading-[17px] bg-[#e8e7e3] border-b-2 border-[#d0d0d0]">
            <div className="w-[20px] pl-[3px] border-r-2 border-[#777] bg-[#eeeeee]">{i + 1}</div>
            <div className="w-[65px] pl-[3px] border-r border-[#ccc] whitespace-nowrap">{r[0]}</div>
            <div className="w-[81px] pl-[3px] border-r border-[#ccc]">{r[1]}</div>
            <div className="w-[81px] pl-[3px] border-r border-[#ccc]">{r[2]}</div>
            <div className="w-[80px] pl-[3px]">{r[3]}</div>
          </div>
        ))}
        <div className="h-[4px] flex bg-[#e8e7e3]">
          <div className="w-[20px] border-r-2 border-[#777] bg-[#eeeeee]" />
        </div>
      </div>
    </div>
    {/* sogou input bar */}
    <div className="absolute left-[475px] top-[175px] w-[200px] h-[30px] flex items-center">
      <div className="w-[29px] h-[29px] rounded-[4px] bg-[#f0601e] -rotate-12 flex items-center justify-center text-white font-black text-[24px] leading-none z-10">S</div>
      <div className="-ml-[2px] flex-1 h-[25px] bg-white flex items-center gap-[10px] pl-[7px] text-[#1a78d6]">
        <span className="font-bold text-[15px] leading-none">中</span>
        <span className="font-bold text-[13px] leading-none">°,</span>
        <Mic size={16} strokeWidth={2.500} />
        <Keyboard size={16} strokeWidth={2.500} />
        <Shirt size={16} fill="#1a78d6" />
      </div>
    </div>
  </div>
);

// ---------- left column ----------
const leftRowGray = [false, true, true, false, false, false, false, true, false, false, true, true, true, true, true, true];

const LeftColumn = () => (
  <div className="w-[156px] shrink-0 flex flex-col pr-[4px] bg-[#f4f4f4]">
    <div className="h-[22px] flex items-center pr-[8px] bg-[#0f7ad4]">
      <Grip light />
      <PanelButtons c="#fff" />
    </div>
    <div className="h-[27px]" />
    <div className="h-[473px] flex">
      <div className="w-[136px] bg-white text-[12px] leading-[16.500px] text-[#222] pt-[177px] overflow-hidden">
        <div className="-ml-[4px]">几何体</div>
        <div className="-ml-[4px]">几何体</div>
      </div>
      <div className="w-[16px] flex flex-col bg-[#f0f0f0] pt-[5px]">
        <ScrollArrow up />
        <div className="mt-[6px] h-[413px] bg-[#cdcdcd]" />
        <div className="mt-[32px]">
          <ScrollArrow />
        </div>
      </div>
    </div>
    <div className="h-[6px]" />
    <div className="h-[20px] flex items-center pr-[8px] border-r border-[#ccc]">
      <Grip />
      <PanelButtons />
    </div>
    <div className="flex-1 flex bg-[#f0f0f0] overflow-hidden border-b border-[#777] border-t border-t-[#ccc]">
      <div className="w-[136px] pt-px bg-white border-r border-[#888]">
        {leftRowGray.map((g, i) => (
          <div key={i} className={g ? 'h-[21px] bg-[#e8e7e3] border-b-2 border-[#c9c9c5]' : 'h-[21px] bg-white border-b-2 border-[#cfcfcf]'} />
        ))}
      </div>
      <div className="w-[16px] flex flex-col pt-[7px]">
        <ScrollArrow up />
        <div className="mt-[3px] h-[191px] bg-[#cdcdcd]" />
        <div className="mt-[106px]">
          <ScrollArrow />
        </div>
      </div>
    </div>
  </div>
);

export default function App() {
  return (
    <div className="w-[1627px] h-[1017px] overflow-hidden flex flex-col bg-[#f1f2f5] [font-family:'Noto_Sans','Noto_Sans_CJK_SC',sans-serif]">
      <div className="h-[52px] shrink-0 relative bg-[#eff0f4]">
        <div className="absolute left-[580px] top-0 w-[47px] h-px bg-[#4a90d8]" />
        <div className="pt-[6px] pl-[539px] text-[11px] tracking-[-0.05px] leading-[15px] text-[#555]">A : Static Structural - Mechanical [ANSYS Mechanical Enterprise]</div>
        <div className="absolute right-[14px] top-[9px] flex items-center gap-[24px]">
          <div className="w-[9px] h-[2px] bg-[#333]" />
          <div className="relative w-[10px] h-[11px]">
            <div className="absolute right-0 top-0 w-[7px] h-[7px] border-t-2 border-r border-[#333]" />
            <div className="absolute left-0 bottom-0 w-[8px] h-[8px] border-t-2 border-x border-b border-[#333] bg-[#eff0f4]" />
          </div>
        </div>
        <div className="flex items-center mt-[7px] h-[21px]">
          <span className="ml-[21px] text-[11px] text-[#444]">自动化</span>
          <div className="ml-auto w-[160px] h-[20px] bg-white border border-[#dfe0e4] text-[11px] leading-[19px] pl-[3px] text-[#999]">快速启动</div>
          <svg width="14" height="9" viewBox="0 0 14 9" className="ml-[4px]">
            <path d="M1 8l6-6 6 6" fill="none" stroke="#d8a614" strokeWidth="2" />
          </svg>
          <div className="w-[11px] overflow-hidden ml-[5px] mr-[3px]">
            <Svg w={15} h={15}>
              <rect x="2" y="3" width="11" height="11" fill="#fff" stroke="#888" transform="rotate(-10 8 8)" />
              <path d="M4 8l3 4 6-9" fill="none" stroke="#d8a614" strokeWidth="2" />
            </Svg>
          </div>
        </div>
      </div>
      <Ribbon />
      <div className="h-[875px] flex">
        <LeftColumn />
        <div className="flex-1 min-w-0 flex flex-col">
          <GraphicsToolbar />
          <Viewport />
          <div className="h-[4px] bg-[#f7f7f7]" />
          <div className="flex-1 flex min-h-0">
            <GraphPanel />
            <TablePanel />
          </div>
        </div>
      </div>
    </div>
  );
}
